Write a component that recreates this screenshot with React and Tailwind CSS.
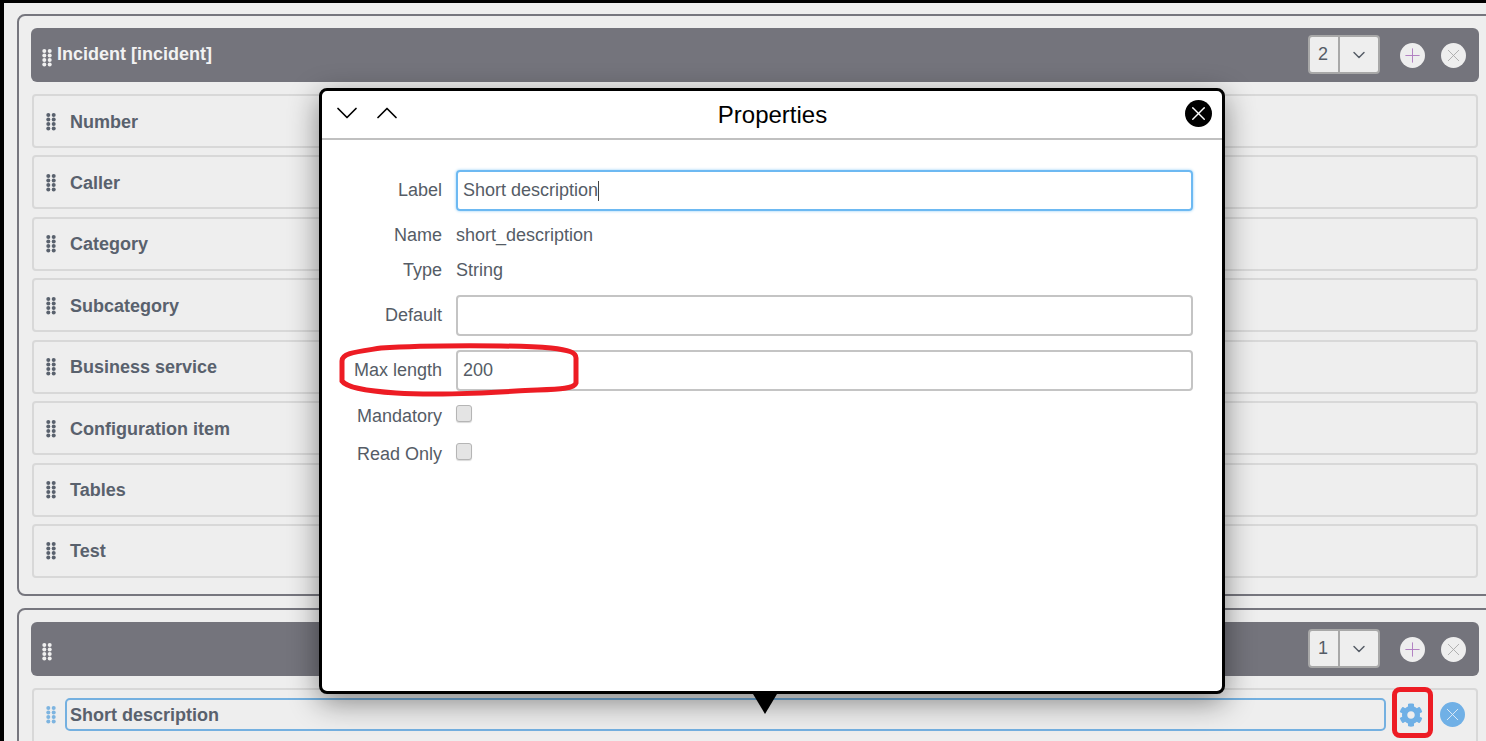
import { ChevronDown, ChevronUp, Plus, X } from 'lucide-react'
import { FaCog } from 'react-icons/fa'

const fields = ['Number', 'Caller', 'Category', 'Subcategory', 'Business service', 'Configuration item', 'Tables', 'Test']

function Grip({ className }) {
  return (
    <svg width="10" height="18" viewBox="0 0 10 18" className={className} fill="currentColor">
      {[2, 6.5, 11, 15.5].map((y) => (
        <g key={y}>
          <circle cx="2.3" cy={y} r="2" />
          <circle cx="7.7" cy={y} r="2" />
        </g>
      ))}
    </svg>
  )
}

function SectionHeader({ title, count }) {
  return (
    <div className="h-[54px] w-[1448px] rounded-md bg-[#74747c] flex items-center pl-[11px] pr-[13px]">
      <Grip className="text-[#f0f0f0] mt-[5px] shrink-0" />
      <span className="ml-[5px] text-[18px] font-bold text-[#f2f2f2] -mt-[2px]">{title}</span>
      <div className="ml-auto flex items-center">
        <div className="w-[72px] h-[39px] -mt-[1px] flex rounded-[4px] border-2 border-[#a8a8a8] bg-[#eeeeee] text-[#555c66] mr-[20px]">
          <span className="w-[30px] flex items-center justify-center text-[18px] border-r-2 border-[#a8a8a8] pr-[2px]">{count}</span>
          <span className="flex-1 flex items-center justify-center">
            <ChevronDown size={20} strokeWidth={1.75} />
          </span>
        </div>
        <span className="w-[25px] h-[25px] rounded-full bg-[#eeeeee] flex items-center justify-center text-[#b07cc0] mr-[16px]">
          <Plus size={23} strokeWidth={1} />
        </span>
        <span className="w-[25px] h-[25px] rounded-full bg-[#eeeeee] flex items-center justify-center text-[#a8a8a8]">
          <X size={21} strokeWidth={1} />
        </span>
      </div>
    </div>
  )
}

function FormRow({ label, className, children }) {
  return (
    <div className={`flex items-center ${className}`}>
      <label className="w-[120px] text-right text-[#555c66] text-[18px] mr-[14px] shrink-0">{label}</label>
      {children}
    </div>
  )
}

function Check() {
  return <span className="w-[16px] h-[17px] rounded-[3px] border border-[#b5b5b5] bg-[#e4e4e4] shadow-[0_1px_1px_rgba(0,0,0,0.15)] -mt-[6px]" />
}

export default function App() {
  return (
    <div className="relative w-[1486px] h-[741px] overflow-hidden bg-[#eeeeee] border-t-[3px] border-l-[4px] border-black font-['Liberation_Sans',Arial,sans-serif]">
      {/* Table section */}
      <div className="ml-[13px] mt-[11px] w-[1480px] h-[582px] border-2 border-[#76767e] rounded-lg pt-[12px] pl-[12px]">
        <SectionHeader title="Incident [incident]" count="2" />
        <div className="mt-[12px] ml-[1px] w-[1446px] flex flex-col gap-[7.43px]">
          {fields.map((f) => (
            <div key={f} className="h-[54px] rounded-[4px] border-2 border-[#d8d8d8] flex items-center pl-[12px] text-[#59616d]">
              <Grip className="shrink-0 mt-[1px]" />
              <span className="ml-[14px] text-[18px] font-bold mt-[2px]">{f}</span>
            </div>
          ))}
        </div>
      </div>

      {/* Second section */}
      <div className="ml-[13px] mt-[12px] w-[1480px] h-[200px] border-2 border-[#76767e] rounded-lg pt-[12px] pl-[12px]">
        <SectionHeader title="" count="1" />
        <div className="mt-[12px] ml-[1px] w-[1446px] h-[60px] rounded-[4px] border-2 border-[#d8d8d8] flex items-center pl-[12px] pb-[7px] text-[#59616d]">
          <Grip className="shrink-0 text-[#7db4e0]" />
          <div className="ml-[9px] w-[1321px] h-[33px] rounded-[5px] border-2 border-[#74b0e0] pl-[3px] pt-[1px] flex items-center text-[18px] font-bold">
            Short description
          </div>
          <FaCog size={24} className="ml-[13px] text-[#6fb0e6]" />
          <span className="ml-[17px] w-[25px] h-[25px] rounded-full bg-[#70b0e6] flex items-center justify-center text-[#e8f0f8]">
            <X size={21} strokeWidth={1} />
          </span>
        </div>
      </div>

      {/* Properties popup */}
      <div className="absolute left-[315px] top-[85px] w-[906px] h-[606px] rounded-lg border-[3px] border-black bg-white shadow-[0_8px_30px_rgba(0,0,0,0.45)]">
        <div className="h-[49px] border-b-2 border-[#c0c0c0] relative flex items-center justify-center">
          <ChevronDown size={36} strokeWidth={1.15} className="absolute left-[7px] top-[4px] text-black" />
          <ChevronUp size={36} strokeWidth={1.15} className="absolute left-[47px] top-[4px] text-black" />
          <span className="text-[24px] text-black pl-[1px]">Properties</span>
          <span className="absolute right-[10px] top-[9px] w-[27px] h-[27px] rounded-full bg-black flex items-center justify-center text-white">
            <X size={23} strokeWidth={1.5} />
          </span>
        </div>
        <div className="pt-[30px]">
          <FormRow label="Label" className="">
            <div className="w-[737px] h-[41px] rounded-[4px] border-2 border-[#6db9f2] shadow-[0_0_3px_#8fcbf5] flex items-center pl-[5px] text-[18px] text-[#555c66]">
              Short description<span className="w-px h-[20px] bg-[#444]" />
            </div>
          </FormRow>
          <FormRow label="Name" className="mt-[12px] h-[24px]">
            <span className="text-[18px] text-[#555c66]">short_description</span>
          </FormRow>
          <FormRow label="Type" className="mt-[11px] h-[24px]">
            <span className="text-[18px] text-[#555c66]">String</span>
          </FormRow>
          <FormRow label="Default" className="mt-[13px]">
            <div className="w-[737px] h-[41px] rounded-[4px] border-2 border-[#c4c4c4]" />
          </FormRow>
          <FormRow label="Max length" className="mt-[14px]">
            <div className="w-[737px] h-[41px] rounded-[4px] border-2 border-[#c4c4c4] flex items-center pl-[5px] text-[18px] text-[#555c66]">200</div>
          </FormRow>
          <FormRow label="Mandatory" className="mt-[12px] h-[26px]">
            <Check />
          </FormRow>
          <FormRow label="Read Only" className="mt-[12px] h-[26px]">
            <Check />
          </FormRow>
        </div>
      </div>

      {/* Popup pointer */}
      <svg className="absolute left-[749px] top-[691px]" width="24" height="20" viewBox="0 0 24 20">
        <polygon points="0,0 24,0 12,20" fill="#000" />
      </svg>

      {/* Red annotations */}
      <svg className="absolute left-[332px] top-[338px] pointer-events-none" width="250" height="62" viewBox="0 0 250 62" fill="none">
        <path d="M6 20 C6 12 20 11 45 7 C90 4 180 4 215 7 C232 9 240 11 240 17 L240 42 C238 49 215 48 180 50 C140 53 90 54 60 52 C30 50 10 46 6 40 Z" stroke="#ed1c24" strokeWidth="5" />
      </svg>
      <div className="absolute left-[1388px] top-[684px] w-[41px] h-[51px] rounded-lg border-[5px] border-[#ed1c24]" />
    </div>
  )
}
